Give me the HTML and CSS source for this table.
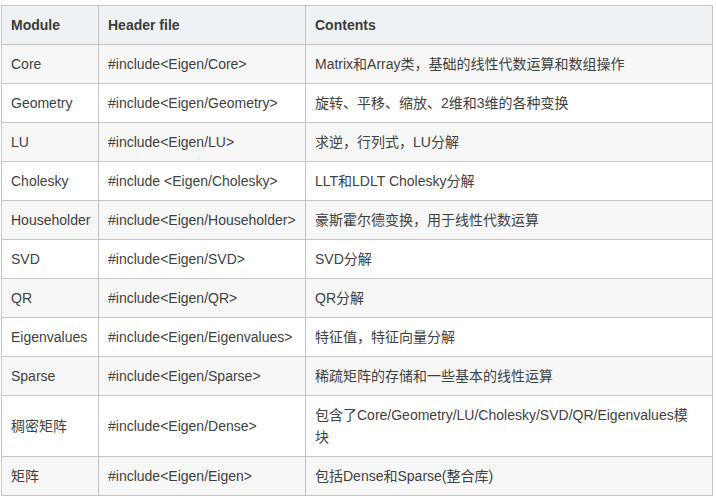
FILE: index.html
```html
<!DOCTYPE html>
<html lang="zh">
<head>
<meta charset="utf-8">
<link rel="stylesheet" href="styles.css">
</head>
<body>
<table class="tbl">
<thead>
<tr><th class="c1">Module</th><th class="c2">Header file</th><th class="c3">Contents</th></tr>
</thead>
<tbody>
<tr><td>Core</td><td>#include&lt;Eigen/Core&gt;</td><td>Matrix和Array类，基础的线性代数运算和数组操作</td></tr>
<tr><td>Geometry</td><td>#include&lt;Eigen/Geometry&gt;</td><td>旋转、平移、缩放、2维和3维的各种变换</td></tr>
<tr><td>LU</td><td>#include&lt;Eigen/LU&gt;</td><td>求逆，行列式，LU分解</td></tr>
<tr><td>Cholesky</td><td>#include &lt;Eigen/Cholesky&gt;</td><td>LLT和LDLT Cholesky分解</td></tr>
<tr><td>Householder</td><td>#include&lt;Eigen/Householder&gt;</td><td>豪斯霍尔德变换，用于线性代数运算</td></tr>
<tr><td>SVD</td><td>#include&lt;Eigen/SVD&gt;</td><td>SVD分解</td></tr>
<tr><td>QR</td><td>#include&lt;Eigen/QR&gt;</td><td>QR分解</td></tr>
<tr><td>Eigenvalues</td><td>#include&lt;Eigen/Eigenvalues&gt;</td><td>特征值，特征向量分解</td></tr>
<tr><td>Sparse</td><td>#include&lt;Eigen/Sparse&gt;</td><td>稀疏矩阵的存储和一些基本的线性运算</td></tr>
<tr><td>稠密矩阵</td><td>#include&lt;Eigen/Dense&gt;</td><td>包含了Core/Geometry/LU/Cholesky/SVD/QR/Eigenvalues模块</td></tr>
<tr><td>矩阵</td><td>#include&lt;Eigen/Eigen&gt;</td><td>包括Dense和Sparse(整合库)</td></tr>
</tbody>
</table>
</body>
</html>
```
FILE: styles.css
```css
html, body {
  margin: 0;
  padding: 0;
  background: #ffffff;
}
body {
  padding: 5px 0 0 1px;
  font-family: "Liberation Sans", Arial, "Noto Sans CJK SC", sans-serif;
  font-size: 14px;
  color: #3f3f3f;
}
.tbl {
  border-collapse: collapse;
  width: 712px;
  table-layout: fixed;
}
.tbl th, .tbl td {
  border: 1px solid #c4c4c4;
  padding: 8px 16px 8px 9px;
  line-height: 22px;
  text-align: left;
  vertical-align: middle;
}
.tbl th {
  font-weight: bold;
  background: #eef2f5;
  color: #3b3b3b;
}
.c1 { width: 71px; }
.c2 { width: 181px; }
.tbl tbody tr:nth-child(odd) td {
  background: #f7f7f7;
}
.tbl tbody tr:nth-child(even) td {
  background: #ffffff;
}
```
